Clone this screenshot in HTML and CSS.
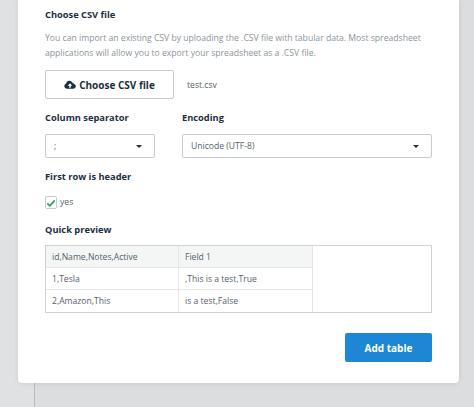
FILE: index.html
```html
<!DOCTYPE html>
<html lang="en">
<head>
<meta charset="utf-8">
<title>Import CSV</title>
<link rel="stylesheet" href="styles.css">
</head>
<body>
<div class="page">
  <div class="sidebar"></div>
  <main class="modal">
    <h2 class="label first">Choose CSV file</h2>
    <p class="help">You can import an existing CSV by uploading the .CSV file with tabular data. Most spreadsheet applications will allow you to export your spreadsheet as a .CSV file.</p>
    <div class="file-row">
      <button class="file-btn">
        <svg class="cloud" viewBox="0 0 16 12" width="12" height="9"><path fill="#1c2f40" d="M3.600 11.600A3.400 3.400 0 0 1 2.700 5 4.600 4.600 0 0 1 11.300 3.500 3.100 3.100 0 0 1 13.400 5.300A3.200 3.200 0 0 1 12.600 11.600ZM8 4.200 5 7.600H7V10.400H9V7.600H11Z" fill-rule="evenodd"/></svg>
        Choose CSV file
      </button>
      <span class="filename">test.csv</span>
    </div>
    <div class="fields">
      <div class="field sep">
        <h2 class="label">Column separator</h2>
        <div class="select"><span>;</span><i class="caret"></i></div>
      </div>
      <div class="field enc">
        <h2 class="label">Encoding</h2>
        <div class="select"><span>Unicode (UTF-8)</span><i class="caret"></i></div>
      </div>
    </div>
    <h2 class="label header-label">First row is header</h2>
    <div class="check-row">
      <span class="check"><svg viewBox="0 0 12 12" width="10" height="10"><path d="M1.500 6.500 4.500 9.300 10.500 2.800" fill="none" stroke="#2a9d6c" stroke-width="2"/></svg></span>
      <span class="yes">yes</span>
    </div>
    <h2 class="label preview-label">Quick preview</h2>
    <div class="grid">
      <div class="cell head c1">id,Name,Notes,Active</div>
      <div class="cell head c2">Field 1</div>
      <div class="cell c1">1,Tesla</div>
      <div class="cell c2">,This is a test,True</div>
      <div class="cell c1 last">2,Amazon,This</div>
      <div class="cell c2 last">is a test,False</div>
      <div class="rest"></div>
    </div>
    <div class="actions"><button class="add">Add table</button></div>
  </main>
</div>
</body>
</html>
```
FILE: styles.css
```css
* { box-sizing: border-box; }
html, body { margin: 0; height: 100%; }
body { background: #dcddde; font-family: "Open Sans", sans-serif; overflow: hidden; }
.page { position: relative; width: 474px; height: 407px; padding: 0 15px 0 18px; }
.sidebar { position: absolute; left: 0; top: 0; bottom: 0; width: 35px; background: #e0e1e2; border-right: 1px solid #b9babc; }
.modal { position: relative; width: 441px; height: 383px; background: #fff; border-radius: 0 0 4px 4px; box-shadow: 0 0 5px rgba(0,0,0,.1); padding: 7px 27px 0; }
.label { margin: 0; font-size: 9.300px; line-height: 16px; font-weight: 700; color: #1c2f40; }
.help { margin: 8px 0 0; font-size: 8.650px; line-height: 15px; color: #8b949c; }
.file-row { display: flex; align-items: center; margin-top: 9px; }
.file-btn { display: flex; align-items: center; justify-content: center; gap: 3px; width: 129px; height: 29px; background: #fff; border: 1px solid #c9cccf; border-radius: 2px; font: 700 10px "Open Sans", sans-serif; color: #1c2f40; padding: 0; }
.filename { margin-left: 13px; font-size: 8.600px; color: #55626d; }
.fields { display: flex; gap: 27px; margin-top: 11px; }
.sep { width: 110px; }
.enc { width: 250px; }
.select { display: flex; align-items: center; justify-content: space-between; height: 24px; margin-top: 8px; padding: 0 12px 0 8px; border: 1px solid #c9cccf; border-radius: 2px; font-size: 8.600px; color: #55626d; }
.caret { width: 0; height: 0; border: 3.500px solid transparent; border-top: 3.500px solid #1c2f40; border-bottom: 0; }
.header-label { margin-top: 11px; }
.check-row { display: flex; align-items: center; gap: 3px; margin-top: 11px; }
.check { display: flex; align-items: center; justify-content: center; width: 12px; height: 13px; border: 1px solid #c9cccf; border-radius: 2px; }
.yes { font-size: 8.600px; line-height: 13px; color: #55626d; }
.preview-label { margin-top: 13px; }
.grid { display: grid; grid-template-columns: 133px 134px 1fr; grid-template-rows: 22px 22px 22px; margin-top: 7px; height: 68px; border: 1px solid #cfd1d3; }
.cell { display: flex; align-items: center; padding-left: 6px; font-size: 8.600px; color: #55626d; border-right: 1px solid #e6e7e8; border-bottom: 1px solid #e6e7e8; }
.cell.last { border-bottom: 0; }
.cell.head { background: #f4f5f5; }
.c1 { grid-column: 1; }
.c2 { grid-column: 2; }
.rest { grid-column: 3; grid-row: 1 / 4; }
.actions { display: flex; justify-content: flex-end; margin-top: 20px; }
.add { width: 87px; height: 29px; background: #1d87d6; border: 0; border-radius: 2px; color: #fff; font: 700 10px "Open Sans", sans-serif; padding: 0; }
```
